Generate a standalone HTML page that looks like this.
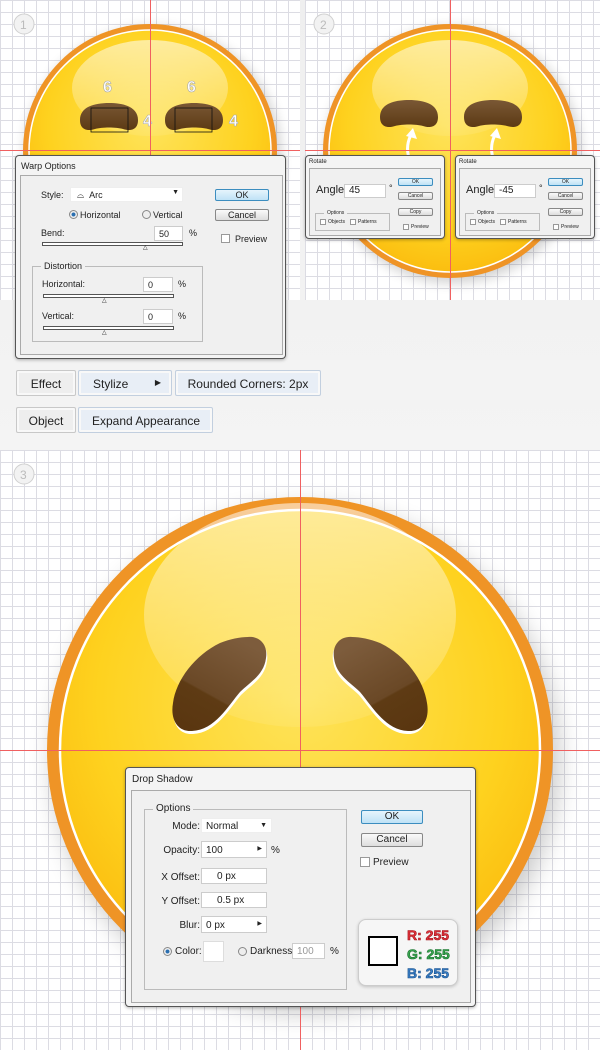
<!DOCTYPE html>
<html><head><meta charset="utf-8"><style>
*{margin:0;padding:0;box-sizing:border-box}
body{width:600px;height:1050px;position:relative;overflow:hidden;background:linear-gradient(#efefef,#fafafa);font-family:"Liberation Sans",sans-serif;font-size:9px;color:#222}
.grid{position:absolute;background-color:#fff;background-image:linear-gradient(90deg,#dcdce3 1px,transparent 1px),linear-gradient(#dcdce3 1px,transparent 1px);background-size:12px 12px;overflow:hidden}
.a{position:absolute}
.dlg{position:absolute;background:#f4f4f4;border:1px solid #555;border-radius:4px;box-shadow:0 1px 3px rgba(0,0,0,.3)}
.in{position:absolute;border:1px solid #aaa;background:#f0f0f0}
.fs{position:absolute;border:1px solid #bbb}
.fs>span{position:absolute;top:-7px;left:8px;background:#f0f0f0;padding:0 3px}
.fld{position:absolute;background:#fff;border:1px solid #ccc;padding-left:4px}
.btn{position:absolute;border:1px solid #888;border-radius:2px;background:linear-gradient(#fafafa,#ddd);text-align:center}
.ok{border-color:#3c8dbf;background:linear-gradient(#e6f4fc,#bfe2f6)}
.sl{position:absolute;height:4px;border:1px solid #555;background:#fff}
.chk{position:absolute;width:9px;height:9px;border:1px solid #999;background:#fff}
.rad{position:absolute;width:9px;height:9px;border:1px solid #888;border-radius:50%;background:#eee}
.mb{position:absolute;border:1px solid #c8c8c8;border-radius:2px;background:#eeeeee;font-size:12px;color:#222;padding-top:6px;box-shadow:inset 0 0 0 2px #f8f8f8}
.mb.b{background:#e8eef6;border-color:#c2cfdf}
</style></head><body>

<!-- Panel 1 -->
<div class="grid" style="left:0;top:0;width:300px;height:300px">
<svg class="a" width="300" height="300" style="left:0;top:0">
<defs>
<radialGradient id="fy" cx="50%" cy="40%" r="60%"><stop offset="0" stop-color="#fee35a"/><stop offset=".7" stop-color="#fed21f"/><stop offset="1" stop-color="#fbbe10"/></radialGradient>
<linearGradient id="hl" x1="0" y1="0" x2="0" y2="1"><stop offset="0" stop-color="#fff" stop-opacity=".55"/><stop offset="1" stop-color="#fff" stop-opacity=".08"/></linearGradient>
<linearGradient id="br" x1="0" y1="0" x2="0" y2="1"><stop offset="0" stop-color="#7a5835"/><stop offset="1" stop-color="#5c3a14"/></linearGradient>
<filter id="sh" x="-20%" y="-20%" width="140%" height="140%"><feGaussianBlur stdDeviation="6"/></filter>
<path id="bean" d="M-29,3 C-29,-10 -15,-14 0,-14 C15,-14 29,-10 29,3 C29,14 20,14 14,12 C7,10 -7,10 -14,12 C-20,14 -29,14 -29,3Z"/>
</defs>
<circle cx="153" cy="155" r="128" fill="#000" opacity=".18" filter="url(#sh)"/>
<circle cx="150" cy="151" r="127" fill="#ef9426"/>
<circle cx="150" cy="151" r="121" fill="url(#fy)" stroke="#fff" stroke-width="1.5"/>
<ellipse cx="150" cy="88" rx="78" ry="48" fill="url(#hl)"/>
<use href="#bean" x="109" y="117" fill="url(#br)"/>
<use href="#bean" x="194" y="117" fill="url(#br)"/>
<g fill="none" stroke="#111" stroke-width=".8"><rect x="91" y="108" width="37" height="24"/><rect x="175" y="108" width="37" height="24"/></g>
<g font-family="Liberation Sans" font-weight="bold" font-size="16" fill="#fff" stroke="#aaa" stroke-width=".6"><text x="103" y="92">6</text><text x="187" y="92">6</text><text x="143" y="126">4</text><text x="229" y="126">4</text></g>
<line x1="150.5" y1="0" x2="150.5" y2="300" stroke="#f06060" stroke-width="1"/>
<line x1="0" y1="150.5" x2="300" y2="150.5" stroke="#f06060" stroke-width="1"/>
<circle cx="24" cy="24" r="10" fill="#f2f2f2" stroke="#d0d0d0"/><text x="20" y="29" font-size="12" fill="#bbb" font-family="Liberation Sans">1</text>
</svg>
</div>

<!-- Panel 2 -->
<div class="grid" style="left:305px;top:0;width:295px;height:300px">
<svg class="a" width="295" height="300" style="left:0;top:0">
<circle cx="148" cy="155" r="128" fill="#000" opacity=".18" filter="url(#sh)"/>
<circle cx="145" cy="151" r="127" fill="#ef9426"/>
<circle cx="145" cy="151" r="121" fill="url(#fy)" stroke="#fff" stroke-width="1.5"/>
<ellipse cx="145" cy="88" rx="78" ry="48" fill="url(#hl)"/>
<use href="#bean" x="104" y="114" fill="url(#br)"/>
<use href="#bean" x="188" y="114" fill="url(#br)"/>
<g fill="none" stroke="#fff" stroke-width="3" stroke-linecap="round"><path d="M104,158 Q100,145 107,133"/><path d="M188,158 Q184,145 191,133"/></g>
<g fill="#fff"><path d="M101,136 L108,128 L112,139Z"/><path d="M185,136 L192,128 L196,139Z"/></g>
<line x1="145.5" y1="0" x2="145.5" y2="300" stroke="#f06060"/>
<line x1="0" y1="150.5" x2="295" y2="150.5" stroke="#f06060"/>
<circle cx="19" cy="24" r="10" fill="#f2f2f2" stroke="#d0d0d0"/><text x="15" y="29" font-size="12" fill="#bbb" font-family="Liberation Sans">2</text>
</svg>
</div>

<!-- Rotate dialogs -->
<div class="dlg" style="left:305px;top:155px;width:140px;height:84px;font-size:6px">
<div class="a" style="left:3px;top:3px">Rotate</div>
<div class="in" style="left:3px;top:12px;width:132px;height:68px">
<div class="a" style="left:6px;top:15px;font-size:11px">Angle:</div>
<div class="fld" style="left:34px;top:15px;width:42px;height:14px;font-size:10px">45</div>
<div class="a" style="left:79px;top:14px;font-size:9px">°</div>
<div class="btn ok" style="left:88px;top:9px;width:35px;height:8px;font-size:5px">OK</div>
<div class="btn" style="left:88px;top:23px;width:35px;height:8px;font-size:5px">Cancel</div>
<div class="btn" style="left:88px;top:39px;width:35px;height:8px;font-size:5px">Copy</div>
<div class="fs" style="left:5px;top:44px;width:75px;height:18px"><span style="top:-4px;font-size:5px">Options</span>
<div class="chk" style="left:4px;top:5px;width:6px;height:6px"></div><div class="a" style="left:12px;top:5px;font-size:5px">Objects</div>
<div class="chk" style="left:34px;top:5px;width:6px;height:6px"></div><div class="a" style="left:42px;top:5px;font-size:5px">Patterns</div></div>
<div class="chk" style="left:93px;top:55px;width:6px;height:6px"></div><div class="a" style="left:101px;top:55px;font-size:5px">Preview</div>
</div></div>
<div class="dlg" style="left:455px;top:155px;width:140px;height:84px;font-size:6px">
<div class="a" style="left:3px;top:3px">Rotate</div>
<div class="in" style="left:3px;top:12px;width:132px;height:68px">
<div class="a" style="left:6px;top:15px;font-size:11px">Angle:</div>
<div class="fld" style="left:34px;top:15px;width:42px;height:14px;font-size:10px">-45</div>
<div class="a" style="left:79px;top:14px;font-size:9px">°</div>
<div class="btn ok" style="left:88px;top:9px;width:35px;height:8px;font-size:5px">OK</div>
<div class="btn" style="left:88px;top:23px;width:35px;height:8px;font-size:5px">Cancel</div>
<div class="btn" style="left:88px;top:39px;width:35px;height:8px;font-size:5px">Copy</div>
<div class="fs" style="left:5px;top:44px;width:75px;height:18px"><span style="top:-4px;font-size:5px">Options</span>
<div class="chk" style="left:4px;top:5px;width:6px;height:6px"></div><div class="a" style="left:12px;top:5px;font-size:5px">Objects</div>
<div class="chk" style="left:34px;top:5px;width:6px;height:6px"></div><div class="a" style="left:42px;top:5px;font-size:5px">Patterns</div></div>
<div class="chk" style="left:93px;top:55px;width:6px;height:6px"></div><div class="a" style="left:101px;top:55px;font-size:5px">Preview</div>
</div></div>

<!-- Warp Options -->
<div class="dlg" style="left:15px;top:155px;width:271px;height:204px">
<div class="a" style="left:5px;top:5px">Warp Options</div>
<div class="in" style="left:4px;top:19px;width:263px;height:180px">
<div class="a" style="left:20px;top:14px">Style:</div>
<div class="fld" style="left:49px;top:11px;width:113px;height:15px;border-color:#eee;padding-top:2px;padding-left:6px">⌓ &nbsp;Arc<span style="position:absolute;right:3px;top:1px;font-size:7px">▼</span></div>
<div class="btn ok" style="left:194px;top:13px;width:54px;height:12px">OK</div>
<div class="btn" style="left:194px;top:33px;width:54px;height:12px">Cancel</div>
<div class="chk" style="left:200px;top:58px"></div><div class="a" style="left:214px;top:58px">Preview</div>
<div class="rad" style="left:48px;top:34px;background:radial-gradient(#2a6fb0 35%,#eee 45%)"></div><div class="a" style="left:59px;top:34px">Horizontal</div>
<div class="rad" style="left:121px;top:34px"></div><div class="a" style="left:132px;top:34px">Vertical</div>
<div class="a" style="left:20px;top:52px">Bend:</div>
<div class="fld" style="left:133px;top:50px;width:29px;height:15px;padding-top:2px">50</div><div class="a" style="left:168px;top:52px">%</div>
<div class="sl" style="left:21px;top:66px;width:141px"></div><div class="a" style="left:122px;top:68px;font-size:6px">△</div>
<div class="fs" style="left:11px;top:90px;width:171px;height:76px"><span style="top:-6px">Distortion</span>
<div class="a" style="left:9px;top:12px">Horizontal:</div>
<div class="fld" style="left:110px;top:10px;width:30px;height:15px;padding-top:2px">0</div><div class="a" style="left:145px;top:12px">%</div>
<div class="sl" style="left:10px;top:27px;width:131px"></div><div class="a" style="left:69px;top:30px;font-size:6px">△</div>
<div class="a" style="left:9px;top:44px">Vertical:</div>
<div class="fld" style="left:110px;top:42px;width:30px;height:15px;padding-top:2px">0</div><div class="a" style="left:145px;top:44px">%</div>
<div class="sl" style="left:10px;top:59px;width:131px"></div><div class="a" style="left:69px;top:62px;font-size:6px">△</div>
</div></div></div>

<!-- menu buttons -->
<div class="mb" style="left:16px;top:370px;width:60px;height:26px;text-align:center">Effect</div>
<div class="mb b" style="left:78px;top:370px;width:94px;height:26px;padding-left:14px">Stylize<span style="position:absolute;right:10px;top:7px;font-size:8px">▶</span></div>
<div class="mb b" style="left:175px;top:370px;width:146px;height:26px;text-align:center">Rounded Corners: 2px</div>
<div class="mb" style="left:16px;top:407px;width:60px;height:26px;text-align:center">Object</div>
<div class="mb b" style="left:78px;top:407px;width:135px;height:26px;padding-left:13px">Expand Appearance</div>

<!-- Panel 3 -->
<div class="grid" style="left:0;top:450px;width:600px;height:600px">
<svg class="a" width="600" height="600" style="left:0;top:0">
<defs><filter id="sh2" x="-20%" y="-20%" width="140%" height="140%"><feGaussianBlur stdDeviation="12"/></filter>
<linearGradient id="br2" gradientUnits="userSpaceOnUse" x1="240" y1="640" x2="190" y2="730"><stop offset="0" stop-color="#7d5c3c"/><stop offset=".6" stop-color="#6a4826"/><stop offset=".62" stop-color="#5e3b14"/><stop offset="1" stop-color="#5a3610"/></linearGradient>
<path id="eye" d="M248,637 C260,636 268,645 266,658 C264,675 250,682 240,692 C228,706 215,730 192,731 C178,732 170,720 173,703 C176,680 195,655 220,643 C230,639 240,637 248,637Z"/></defs>
<circle cx="306" cy="310" r="254" fill="#000" opacity=".2" filter="url(#sh2)"/>
<circle cx="300" cy="300" r="253" fill="#ef9426"/>
<circle cx="300" cy="300" r="240" fill="url(#fy)" stroke="#fff" stroke-width="2.5"/>
<ellipse cx="300" cy="165" rx="156" ry="112" fill="url(#hl)"/>
<g transform="translate(0,-450)">
<use href="#eye" x="1" y="3" fill="#fff"/><use href="#eye" fill="url(#br2)"/>
<g transform="translate(600,0) scale(-1,1)"><use href="#eye" x="1" y="3" fill="#fff"/><use href="#eye" fill="url(#br2)"/></g>
</g>
<line x1="300.5" y1="0" x2="300.5" y2="600" stroke="#f06060"/>
<line x1="0" y1="300.5" x2="600" y2="300.5" stroke="#f06060"/>
<circle cx="24" cy="24" r="10" fill="#f2f2f2" stroke="#d0d0d0"/><text x="20" y="29" font-size="12" fill="#bbb" font-family="Liberation Sans">3</text>
</svg>
</div>

<!-- Drop Shadow -->
<div class="dlg" style="left:125px;top:767px;width:351px;height:240px;font-size:10px">
<div class="a" style="left:6px;top:6px">Drop Shadow</div>
<div class="in" style="left:5px;top:22px;width:340px;height:213px">
<div class="fs" style="left:12px;top:18px;width:203px;height:181px"><span style="top:-7px;font-size:10px">Options</span></div>
<div class="a" style="left:22px;top:30px;width:46px;text-align:right">Mode:</div>
<div class="fld" style="left:69px;top:27px;width:71px;height:15px;border-color:#eee;padding-top:2px">Normal<span style="position:absolute;right:4px;top:3px;font-size:7px">▼</span></div>
<div class="a" style="left:22px;top:54px;width:46px;text-align:right">Opacity:</div>
<div class="fld" style="left:69px;top:50px;width:66px;height:17px;padding-top:3px">100<span style="position:absolute;right:4px;top:3px;font-size:6px">▶</span></div><div class="a" style="left:139px;top:54px">%</div>
<div class="a" style="left:22px;top:81px;width:46px;text-align:right">X Offset:</div>
<div class="fld" style="left:69px;top:77px;width:66px;height:16px;padding:2px 0 0 15px">0 px</div>
<div class="a" style="left:22px;top:105px;width:46px;text-align:right">Y Offset:</div>
<div class="fld" style="left:69px;top:101px;width:66px;height:16px;padding:2px 0 0 15px">0.5 px</div>
<div class="a" style="left:22px;top:129px;width:46px;text-align:right">Blur:</div>
<div class="fld" style="left:69px;top:125px;width:66px;height:17px;padding-top:3px">0 px<span style="position:absolute;right:4px;top:3px;font-size:6px">▶</span></div>
<div class="rad" style="left:31px;top:156px;background:radial-gradient(#2a6fb0 35%,#eee 45%)"></div><div class="a" style="left:43px;top:155px">Color:</div>
<div class="fld" style="left:71px;top:150px;width:21px;height:21px;border-color:#ddd"></div>
<div class="rad" style="left:106px;top:156px"></div><div class="a" style="left:118px;top:155px">Darkness:</div>
<div class="fld" style="left:160px;top:152px;width:33px;height:16px;color:#999;padding-top:2px">100</div><div class="a" style="left:198px;top:155px">%</div>
<div class="btn ok" style="left:229px;top:19px;width:62px;height:14px">OK</div>
<div class="btn" style="left:229px;top:42px;width:62px;height:14px">Cancel</div>
<div class="chk" style="left:228px;top:66px;width:10px;height:10px"></div><div class="a" style="left:241px;top:66px">Preview</div>
<div class="a" style="left:226px;top:128px;width:100px;height:67px;border:1px solid #ccc;border-radius:8px;background:#f6f6f6;box-shadow:0 1px 3px rgba(0,0,0,.2)">
<div class="a" style="left:9px;top:16px;width:30px;height:30px;border:2px solid #000;background:#fff"></div>
<div class="a" style="left:48px;top:6px;font-size:14px;font-weight:bold;line-height:19px"><div style="color:#e2343c;-webkit-text-stroke:.6px #a01018">R: 255</div><div style="color:#3aa651;-webkit-text-stroke:.6px #17702c">G: 255</div><div style="color:#3a7fc6;-webkit-text-stroke:.6px #18508c">B: 255</div></div>
</div>
</div></div>
</body></html>
